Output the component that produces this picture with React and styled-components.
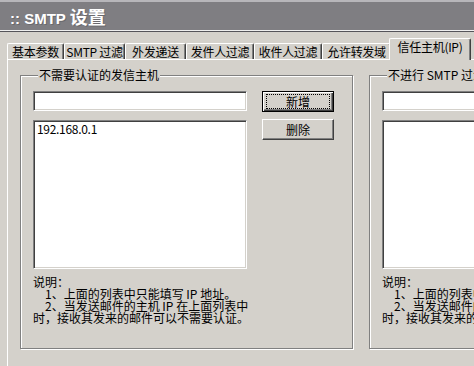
import styled, { createGlobalStyle } from 'styled-components';

const GlobalStyle = createGlobalStyle`
  html, body {
    margin: 0;
    padding: 0;
    background: #d4d1cb;
  }
  body {
    font-family: "Noto Sans CJK SC", "Liberation Sans", sans-serif;
    font-size: 12px;
    color: #000;
  }
`;

const tabs = [
  { label: '基本参数', w: 57 },
  { label: 'SMTP 过滤', w: 61 },
  { label: '外发递送', w: 61 },
  { label: '发件人过滤', w: 68 },
  { label: '收件人过滤', w: 68 },
  { label: '允许转发域', w: 69 },
  { label: '信任主机(IP)', w: 82, active: true },
];

const groups = [
  { title: '不需要认证的发信主机', items: ['192.168.0.1'] },
  { title: '不进行 SMTP 过滤的发信主机', items: [] },
];

function Note() {
  return (
    <Notes>
      <NoteLine>说明：</NoteLine>
      <NoteLine $indent>1、上面的列表中只能填写 IP 地址。</NoteLine>
      <NoteLine $indent>2、当发送邮件的主机 IP 在上面列表中</NoteLine>
      <NoteLine>时，接收其发来的邮件可以不需要认证。</NoteLine>
    </Notes>
  );
}

function HostGroup({ title, items }) {
  return (
    <GroupBox>
      <Legend>{title}</Legend>
      <GroupBody>
        <Column>
          <TextInput />
          <ListBox>
            {items.map((ip) => (
              <ListItem key={ip}>{ip}</ListItem>
            ))}
          </ListBox>
          <Note />
        </Column>
        <Buttons>
          <Button $default>
            <ButtonLabel $focus>新增</ButtonLabel>
          </Button>
          <Button>
            <ButtonLabel>删除</ButtonLabel>
          </Button>
        </Buttons>
      </GroupBody>
    </GroupBox>
  );
}

export default function App() {
  return (
    <Screen>
      <GlobalStyle />
      <TitleBar>
        <Title>
          :: SMTP <Cjk>设置</Cjk>
        </Title>
      </TitleBar>
      <TabStrip>
        {tabs.map((t) => (
          <Tab key={t.label} $w={t.w} $active={t.active}>
            {t.label}
          </Tab>
        ))}
      </TabStrip>
      <Panel>
        {groups.map((g) => (
          <HostGroup key={g.title} {...g} />
        ))}
      </Panel>
    </Screen>
  );
}

const Screen = styled.div`
  width: 474px;
  height: 366px;
  overflow: hidden;
  background: #d4d1cb;
`;

const TitleBar = styled.div`
  box-sizing: border-box;
  height: 32px;
  border-top: 2px solid #b7b6ba;
  background: #7f7e82;
  box-shadow: inset 0 -1px 0 #55545a, inset 0 -2px 0 #eeeeee;
  display: flex;
  align-items: center;
  padding: 0 0 3px 10px;
`;

const Title = styled.div`
  font-family: "Liberation Sans", "Noto Sans CJK SC", sans-serif;
  font-weight: bold;
  font-size: 15px;
  color: #ffffff;
  text-shadow: 1px 1px 0 #6a696d;
  white-space: pre;
`;

const Cjk = styled.span`
  font-family: "Noto Sans CJK SC", sans-serif;
  font-size: 18px;
`;

const TabStrip = styled.div`
  display: flex;
  align-items: flex-end;
  height: 21px;
  margin-top: 6px;
  padding-left: 7px;
`;

const Tab = styled.div`
  box-sizing: border-box;
  position: relative;
  z-index: ${(p) => (p.$active ? 2 : 1)};
  width: ${(p) => p.$w}px;
  height: ${(p) => (p.$active ? 22 : 16)}px;
  margin-left: ${(p) => (p.$active ? -2 : 0)}px;
  margin-bottom: ${(p) => (p.$active ? -1 : 0)}px;
  display: flex;
  align-items: center;
  justify-content: center;
  padding-bottom: ${(p) => (p.$active ? 5 : 0)}px;
  background: #d4d1cb;
  border-top: 1px solid #ffffff;
  border-left: 1px solid #ffffff;
  border-right: 1px solid #404040;
  border-radius: 2px 2px 0 0;
  box-shadow: inset -1px 0 0 #808080;
  font-size: 12px;
  line-height: 12px;
  letter-spacing: -0.3px;
  white-space: nowrap;
  overflow: hidden;
`;

const Panel = styled.div`
  display: flex;
  gap: 16px;
  margin-left: 7px;
  width: 600px;
  height: 320px;
  border-top: 1px solid #ffffff;
  border-left: 1px solid #ffffff;
  padding: 9px 0 0 12px;
`;

const GroupBox = styled.fieldset`
  box-sizing: border-box;
  flex: none;
  width: 333px;
  height: 280px;
  margin: 0;
  padding: 10px 12px 0 12px;
  min-width: 0;
  border: 1px solid #808080;
  box-shadow: inset 1px 1px 0 #ffffff, 1px 1px 0 #ffffff;
`;

const Legend = styled.legend`
  margin-left: 5px;
  padding: 0 1px;
  font-size: 12px;
  line-height: 12px;
  background: #d4d1cb;
  white-space: nowrap;
`;

const GroupBody = styled.div`
  display: flex;
  gap: 15px;
`;

const Column = styled.div`
  display: flex;
  flex-direction: column;
  width: 214px;
`;

const sunken = `
  box-sizing: border-box;
  background: #ffffff;
  border: 1px solid;
  border-color: #808080 #ffffff #ffffff #808080;
  box-shadow: inset 1px 1px 0 #404040, inset -1px -1px 0 #d4d1cb;
`;

const TextInput = styled.div`
  ${sunken}
  height: 20px;
`;

const ListBox = styled.div`
  ${sunken}
  height: 149px;
  margin-top: 9px;
  padding: 2px 3px;
`;

const ListItem = styled.div`
  font-size: 12px;
  line-height: 12px;
  letter-spacing: -0.3px;
`;

const Notes = styled.div`
  margin-top: 7px;
`;

const NoteLine = styled.div`
  font-size: 12px;
  line-height: 12px;
  white-space: nowrap;
  padding-left: ${(p) => (p.$indent ? 12 : 0)}px;
`;

const Buttons = styled.div`
  display: flex;
  flex-direction: column;
  gap: 7px;
  width: 72px;
`;

const Button = styled.div`
  box-sizing: border-box;
  height: 21px;
  display: flex;
  padding: 2px 3px;
  background: #d4d1cb;
  border: 1px solid;
  border-color: ${(p) =>
    p.$default ? '#000000' : '#ffffff #404040 #404040 #ffffff'};
  box-shadow: ${(p) =>
    p.$default
      ? 'inset 1px 1px 0 #ffffff, inset -1px -1px 0 #404040, inset -2px -2px 0 #808080'
      : 'inset -1px -1px 0 #808080'};
`;

const ButtonLabel = styled.span`
  flex: 1;
  display: flex;
  align-items: center;
  justify-content: center;
  font-size: 12px;
  line-height: 12px;
  border: 1px dotted ${(p) => (p.$focus ? '#000000' : 'transparent')};
`;
